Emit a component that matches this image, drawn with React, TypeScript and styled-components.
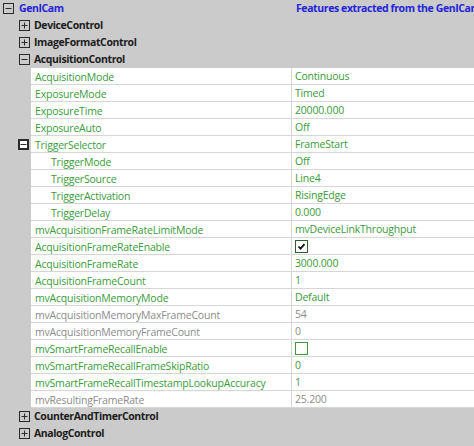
import styled, { createGlobalStyle } from 'styled-components'

type Tone = 'green' | 'gray'

interface Prop {
  kind: 'prop'
  name: string
  value?: string
  check?: boolean
  tone: Tone
  indent?: boolean
  expander?: boolean
}

interface Category {
  kind: 'cat'
  name: string
  open: boolean
}

type Item = Prop | Category

const rowHeight = 17
const gutterWidth = 31
const nameWidth = 261

const items: Item[] = [
  { kind: 'cat', name: 'DeviceControl', open: false },
  { kind: 'cat', name: 'ImageFormatControl', open: false },
  { kind: 'cat', name: 'AcquisitionControl', open: true },
  { kind: 'prop', name: 'AcquisitionMode', value: 'Continuous', tone: 'green' },
  { kind: 'prop', name: 'ExposureMode', value: 'Timed', tone: 'green' },
  { kind: 'prop', name: 'ExposureTime', value: '20000.000', tone: 'green' },
  { kind: 'prop', name: 'ExposureAuto', value: 'Off', tone: 'green' },
  { kind: 'prop', name: 'TriggerSelector', value: 'FrameStart', tone: 'green', expander: true },
  { kind: 'prop', name: 'TriggerMode', value: 'Off', tone: 'green', indent: true },
  { kind: 'prop', name: 'TriggerSource', value: 'Line4', tone: 'green', indent: true },
  { kind: 'prop', name: 'TriggerActivation', value: 'RisingEdge', tone: 'green', indent: true },
  { kind: 'prop', name: 'TriggerDelay', value: '0.000', tone: 'green', indent: true },
  { kind: 'prop', name: 'mvAcquisitionFrameRateLimitMode', value: 'mvDeviceLinkThroughput', tone: 'green' },
  { kind: 'prop', name: 'AcquisitionFrameRateEnable', check: true, tone: 'green' },
  { kind: 'prop', name: 'AcquisitionFrameRate', value: '3000.000', tone: 'green' },
  { kind: 'prop', name: 'AcquisitionFrameCount', value: '1', tone: 'green' },
  { kind: 'prop', name: 'mvAcquisitionMemoryMode', value: 'Default', tone: 'green' },
  { kind: 'prop', name: 'mvAcquisitionMemoryMaxFrameCount', value: '54', tone: 'gray' },
  { kind: 'prop', name: 'mvAcquisitionMemoryFrameCount', value: '0', tone: 'gray' },
  { kind: 'prop', name: 'mvSmartFrameRecallEnable', check: false, tone: 'green' },
  { kind: 'prop', name: 'mvSmartFrameRecallFrameSkipRatio', value: '0', tone: 'green' },
  { kind: 'prop', name: 'mvSmartFrameRecallTimestampLookupAccuracy', value: '1', tone: 'green' },
  { kind: 'prop', name: 'mvResultingFrameRate', value: '25.200', tone: 'gray' },
  { kind: 'cat', name: 'CounterAndTimerControl', open: false },
  { kind: 'cat', name: 'AnalogControl', open: false },
]

const toneColor: Record<Tone, string> = {
  green: '#3a9c3a',
  gray: '#8c8c8c',
}

const ExpandBox = ({ open, strong }: { open: boolean; strong?: boolean }) => (
  <BoxIcon width="11" height="11" viewBox="0 0 11 11">
    <rect
      x={strong ? 1 : 0.5}
      y={strong ? 1 : 0.5}
      width={strong ? 9 : 10}
      height={strong ? 9 : 10}
      fill={strong ? '#ffffff' : 'none'}
      stroke="#2a2a2a"
      strokeWidth={strong ? 2 : 1}
    />
    <line x1="2.5" y1="5.5" x2="8.5" y2="5.5" stroke="#2a2a2a" strokeWidth="1" />
    {!open && <line x1="5.5" y1="2.5" x2="5.5" y2="8.5" stroke="#2a2a2a" strokeWidth="1" />}
  </BoxIcon>
)

const CheckBox = ({ checked }: { checked: boolean }) => (
  <CheckIcon width="13" height="13" viewBox="0 0 13 13">
    <rect x="0.5" y="0.5" width="12" height="12" fill="#ffffff" stroke={checked ? '#2f5f2f' : '#3a9c3a'} />
    {checked && <path d="M3.5 6.5 L5.5 8.6 L9.5 4.2" fill="none" stroke="#111111" strokeWidth="1.8" />}
  </CheckIcon>
)

const App = () => {
  return (
    <>
      <GlobalStyle />
      <Tree>
        <HeaderRow>
          <CategoryCell $level={0}>
            <ExpandBox open />
            <RootLabel>GenICam</RootLabel>
          </CategoryCell>
          <HeaderNote>Features extracted from the GenICam</HeaderNote>
        </HeaderRow>

        {items.map((item) =>
          item.kind === 'cat' ? (
            <CategoryCell key={item.name} $level={1}>
              <ExpandBox open={item.open} />
              <CategoryLabel>{item.name}</CategoryLabel>
            </CategoryCell>
          ) : (
            <PropRow key={item.name}>
              <Gutter>{item.expander && <ExpandBox open strong />}</Gutter>
              <NameCell $tone={item.tone} $indent={!!item.indent}>
                {item.name}
              </NameCell>
              <ValueCell $tone={item.tone}>
                {item.check !== undefined ? <CheckBox checked={item.check} /> : item.value}
              </ValueCell>
            </PropRow>
          )
        )}
      </Tree>
    </>
  )
}

const GlobalStyle = createGlobalStyle`
  html, body {
    margin: 0;
    padding: 0;
    background: #cbcbcb;
  }
`

const Tree = styled.div`
  width: 474px;
  height: 446px;
  overflow: hidden;
  background: #cbcbcb;
  font-family: 'Segoe UI', 'Open Sans', 'Noto Sans', sans-serif;
  font-size: 10.5px;
  letter-spacing: -0.2px;
  line-height: ${rowHeight}px;
`

const HeaderRow = styled.div`
  display: grid;
  grid-template-columns: ${gutterWidth + nameWidth}px 1fr;
  height: ${rowHeight}px;
`

const CategoryCell = styled.div<{ $level: number }>`
  display: flex;
  align-items: center;
  height: ${rowHeight}px;
  padding-left: ${({ $level }) => 3 + $level * 16}px;
  white-space: nowrap;
`

const BoxIcon = styled.svg`
  flex: none;
  display: block;
`

const RootLabel = styled.span`
  margin-left: 5px;
  font-weight: 700;
  letter-spacing: -0.4px;
  color: #2424d8;
`

const CategoryLabel = styled.span`
  margin-left: 4px;
  font-weight: 700;
  letter-spacing: -0.4px;
  color: #1c1c1c;
`

const HeaderNote = styled.div`
  padding-left: 4px;
  font-weight: 700;
  letter-spacing: -0.4px;
  color: #2424d8;
  white-space: nowrap;
  overflow: hidden;
`

const PropRow = styled.div`
  display: grid;
  grid-template-columns: ${gutterWidth}px ${nameWidth}px 1fr;
  height: ${rowHeight}px;
`

const Gutter = styled.div`
  display: flex;
  align-items: center;
  justify-content: flex-end;
  padding-right: 2px;
`

const NameCell = styled.div<{ $tone: Tone; $indent: boolean }>`
  background: #ffffff;
  border-bottom: 1px solid #d6d6d6;
  border-right: 1px solid #d6d6d6;
  padding-left: ${({ $indent }) => ($indent ? 20 : 4)}px;
  line-height: 18px;
  color: ${({ $tone }) => toneColor[$tone]};
  white-space: nowrap;
  overflow: hidden;
`

const ValueCell = styled.div<{ $tone: Tone }>`
  display: flex;
  align-items: center;
  background: #ffffff;
  border-bottom: 1px solid #d6d6d6;
  padding-left: 3px;
  line-height: 18px;
  color: ${({ $tone }) => toneColor[$tone]};
  white-space: nowrap;
  overflow: hidden;
`

const CheckIcon = styled.svg`
  display: block;
`

export default App
